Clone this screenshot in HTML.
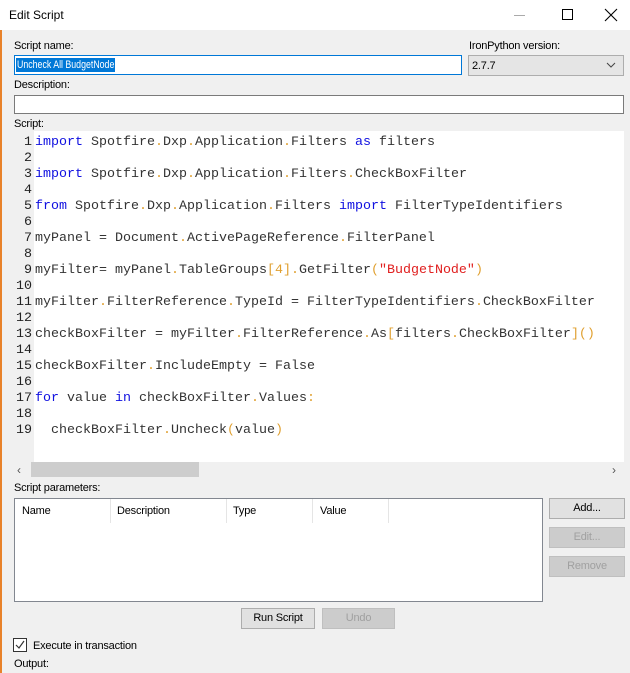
<!DOCTYPE html>
<html><head><style>
*{margin:0;padding:0;box-sizing:border-box}
body{width:630px;height:673px;background:#f0f0f0;font-family:"Liberation Sans",sans-serif;font-size:11px;letter-spacing:-0.2px;color:#000;position:relative;overflow:hidden}
.a{position:absolute}
.title{left:0;top:0;width:630px;height:30px;background:#fff}
.lbl{position:absolute;font-size:11px;line-height:14px;white-space:nowrap}
.box{position:absolute;background:#fff;border:1px solid #7a7a7a}
.code{left:14px;top:131px;width:610px;height:332px;background:#fff}
.gut{left:14px;top:131px;width:20px;height:332px;background:#f0f0f0}
.ln{position:absolute;left:14px;width:18px;text-align:right;font:13.33px "Liberation Mono",monospace;letter-spacing:0;color:#222}
.cl{position:absolute;left:35px;font:13.33px "Liberation Mono",monospace;letter-spacing:0;color:#333;white-space:pre}
.k{color:#1010e0}.p{color:#e0a030}.s{color:#e02020}
.btn{position:absolute;background:#e1e1e1;border:1px solid #adadad;text-align:center;line-height:19px;font-size:11px}
.dis{background:#ccc;border-color:#bfbfbf;color:#a0a0a0}
.hd{position:absolute;top:505px;font-size:11px}
.div{position:absolute;top:499px;width:1px;height:24px;background:#e5e5e5}
</style></head><body>
<div class="a" style="left:0;top:0;width:2px;height:673px;background:#e8822a"></div>
<div class="a title"></div>
<div class="lbl" style="left:9px;top:8px;font-size:12px;letter-spacing:0">Edit Script</div>
<div class="a" style="left:514px;top:15px;width:11px;height:1px;background:#aaa"></div>
<div class="a" style="left:562px;top:9px;width:11px;height:11px;border:1px solid #000"></div>
<svg class="a" style="left:604px;top:8px" width="14" height="14"><path d="M1 1L13 13M13 1L1 13" stroke="#000" stroke-width="1.1"/></svg>

<div class="lbl" style="left:14px;top:39px">Script name:</div>
<div class="lbl" style="left:469px;top:39px">IronPython version:</div>
<div class="box" style="left:14px;top:55px;width:448px;height:20px;border-color:#0078d7"></div>
<div class="a" style="left:16px;top:58px;width:99px;height:14px;background:#0078d7"></div>
<div class="lbl" style="left:17px;top:58px;color:#fff;letter-spacing:0;transform:scaleX(0.8);transform-origin:0 0">Uncheck All BudgetNode</div>
<div class="a" style="left:468px;top:55px;width:156px;height:21px;background:#e5e5e5;border:1px solid #adadad"></div>
<div class="lbl" style="left:472px;top:59px">2.7.7</div>
<svg class="a" style="left:606px;top:62px" width="10" height="7"><path d="M1 1L5 5L9 1" stroke="#444" fill="none"/></svg>
<div class="lbl" style="left:14px;top:78px">Description:</div>
<div class="box" style="left:14px;top:95px;width:610px;height:19px"></div>
<div class="lbl" style="left:14px;top:117px">Script:</div>

<div class="a code"></div><div class="a gut"></div>
<div class="ln" style="top:135px">1</div><div class="ln" style="top:151px">2</div><div class="ln" style="top:167px">3</div><div class="ln" style="top:183px">4</div><div class="ln" style="top:199px">5</div><div class="ln" style="top:215px">6</div><div class="ln" style="top:231px">7</div><div class="ln" style="top:247px">8</div><div class="ln" style="top:263px">9</div><div class="ln" style="top:279px">10</div><div class="ln" style="top:295px">11</div><div class="ln" style="top:311px">12</div><div class="ln" style="top:327px">13</div><div class="ln" style="top:343px">14</div><div class="ln" style="top:359px">15</div><div class="ln" style="top:375px">16</div><div class="ln" style="top:391px">17</div><div class="ln" style="top:407px">18</div><div class="ln" style="top:423px">19</div>
<div class="cl" style="top:135px"><span class="k">import</span> Spotfire<span class="p">.</span>Dxp<span class="p">.</span>Application<span class="p">.</span>Filters <span class="k">as</span> filters</div>
<div class="cl" style="top:167px"><span class="k">import</span> Spotfire<span class="p">.</span>Dxp<span class="p">.</span>Application<span class="p">.</span>Filters<span class="p">.</span>CheckBoxFilter</div>
<div class="cl" style="top:199px"><span class="k">from</span> Spotfire<span class="p">.</span>Dxp<span class="p">.</span>Application<span class="p">.</span>Filters <span class="k">import</span> FilterTypeIdentifiers</div>
<div class="cl" style="top:231px">myPanel = Document<span class="p">.</span>ActivePageReference<span class="p">.</span>FilterPanel</div>
<div class="cl" style="top:263px">myFilter= myPanel<span class="p">.</span>TableGroups<span class="p">[4].</span>GetFilter<span class="p">(</span><span class="s">"BudgetNode"</span><span class="p">)</span></div>
<div class="cl" style="top:295px">myFilter<span class="p">.</span>FilterReference<span class="p">.</span>TypeId = FilterTypeIdentifiers<span class="p">.</span>CheckBoxFilter</div>
<div class="cl" style="top:327px">checkBoxFilter = myFilter<span class="p">.</span>FilterReference<span class="p">.</span>As<span class="p">[</span>filters<span class="p">.</span>CheckBoxFilter<span class="p">]()</span></div>
<div class="cl" style="top:359px">checkBoxFilter<span class="p">.</span>IncludeEmpty = False</div>
<div class="cl" style="top:391px"><span class="k">for</span> value <span class="k">in</span> checkBoxFilter<span class="p">.</span>Values<span class="p">:</span></div>
<div class="cl" style="top:423px">  checkBoxFilter<span class="p">.</span>Uncheck<span class="p">(</span>value<span class="p">)</span></div>

<div class="a" style="left:14px;top:462px;width:610px;height:16px;background:#f0f0f0"></div>
<div class="a" style="left:31px;top:462px;width:168px;height:15px;background:#cdcdcd"></div>
<div class="lbl" style="left:17px;top:463px;color:#555;font-size:12px">&#8249;</div>
<div class="lbl" style="left:612px;top:463px;color:#555;font-size:12px">&#8250;</div>

<div class="lbl" style="left:14px;top:481px">Script parameters:</div>
<div class="box" style="left:14px;top:498px;width:529px;height:104px;border-color:#828790"></div>
<div class="hd" style="left:22px">Name</div><div class="hd" style="left:117px">Description</div><div class="hd" style="left:233px">Type</div><div class="hd" style="left:320px">Value</div>
<div class="div" style="left:110px"></div><div class="div" style="left:226px"></div><div class="div" style="left:312px"></div><div class="div" style="left:388px"></div>
<div class="btn" style="left:549px;top:498px;width:76px;height:21px">Add...</div>
<div class="btn dis" style="left:549px;top:527px;width:76px;height:21px">Edit...</div>
<div class="btn dis" style="left:549px;top:556px;width:76px;height:21px">Remove</div>
<div class="btn" style="left:241px;top:608px;width:74px;height:21px">Run Script</div>
<div class="btn dis" style="left:322px;top:608px;width:73px;height:21px">Undo</div>
<div class="a" style="left:13px;top:638px;width:14px;height:14px;border:1px solid #333;background:#fff"></div>
<svg class="a" style="left:14px;top:639px" width="12" height="12"><path d="M2 6L5 9L10 2" stroke="#333" fill="none" stroke-width="1.2"/></svg>
<div class="lbl" style="left:33px;top:639px">Execute in transaction</div>
<div class="lbl" style="left:14px;top:657px">Output:</div>
</body></html>
